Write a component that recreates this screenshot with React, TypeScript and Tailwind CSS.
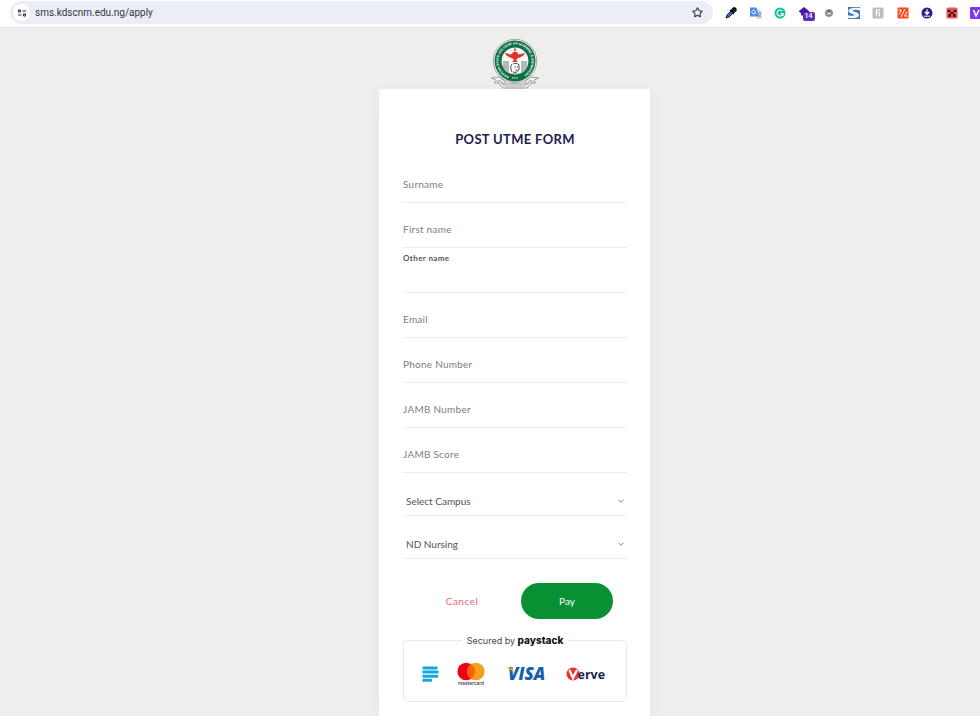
import { useState } from 'react';
import { Star } from 'lucide-react';

const FIELDS = [
  { id: 'surname', label: 'Surname', type: 'text' },
  { id: 'firstName', label: 'First name', type: 'text' },
  { id: 'otherName', label: 'Other name', type: 'text' },
  { id: 'email', label: 'Email', type: 'email' },
  { id: 'phone', label: 'Phone Number', type: 'tel' },
  { id: 'jambNumber', label: 'JAMB Number', type: 'text' },
  { id: 'jambScore', label: 'JAMB Score', type: 'text' },
];

const EXTENSIONS = [
  {
    name: 'Color picker',
    icon: (
      <>
        <path d="M1 11l1-3 4-4 2 2-4 4z" fill="#3f6fd8" stroke="#111827" strokeWidth="1" />
        <path d="M5 3l4 4M6 4l2-2.500a1.500 1.500 0 0 1 2.500 2.500L8 6z" fill="#0b0f1a" stroke="#0b0f1a" strokeWidth="1.500" />
      </>
    ),
  },
  {
    name: 'Translate',
    icon: (
      <>
        <path d="M5 3h6.500v9H7z" fill="#d5d9df" />
        <path d="M0 .5h6.500l2.500 9H0z" fill="#4a86ee" />
        <path d="M5.500 4A2 2 0 1 0 5.800 5.500H4" fill="none" stroke="#fff" strokeWidth="0.900" />
        <path d="M8 6h3M9.500 5v1M10.500 6c0 2-1 3-2 4M9 7.500l2 2.500" stroke="#7d8792" strokeWidth="0.700" fill="none" />
      </>
    ),
  },
  {
    name: 'Grammar check',
    icon: (
      <>
        <circle cx="6" cy="6" r="5.500" fill="#15c39a" />
        <path d="M8.500 4.200A3 3 0 1 0 9 6.700H6.500M9 6.500V9" fill="none" stroke="#fff" strokeWidth="1.200" />
      </>
    ),
  },
  { name: 'Saved pages', badge: '14', icon: <path d="M5 0l5.500 4.500-1.500 1v3H2V6L-.5 4.500z" fill="#4714a8" /> },
  {
    name: 'Site detector',
    icon: (
      <>
        <circle cx="6" cy="6" r="3.800" fill="#555" />
        <circle cx="6" cy="6" r="3.100" fill="none" stroke="#ddd" strokeWidth="0.500" />
        <path d="M4 4.500l1 3.500 1-3 1 3 1-3.500" fill="none" stroke="#fff" strokeWidth="0.700" />
      </>
    ),
  },
  {
    name: 'Similar sites',
    icon: (
      <>
        <path d="M0 0h12v12H0z" fill="#3576b5" />
        <path d="M12 1v2.500C9 2.500 5 2.300 4.800 3.500 4.600 5 11 4.800 11 8c0 3-5 3.800-11 2.700V8.200c3 .8 6 .8 6.200-.2C6.400 6.700.5 7 .5 3.800.500 1 6 .2 12 1z" fill="#f4f8fc" />
      </>
    ),
  },
  {
    name: 'Highlighter',
    icon: (
      <>
        <rect x="0.500" y="0.500" width="11" height="11" rx="1.500" fill="#bdbdbd" />
        <path d="M4.500 2v7.500M4.500 6.500c0-2 3-2 3 0v3M7 2v2" stroke="#fff" strokeWidth="1.200" fill="none" />
      </>
    ),
  },
  {
    name: 'Analytics',
    icon: (
      <>
        <rect x="0.500" y="0.500" width="11" height="11" rx="1" fill="#ff4317" />
        <path d="M1.500 3h3L2 7.500M8 2L4 10M10 4.500L7.500 9h3" stroke="#fff" strokeWidth="1" fill="none" />
      </>
    ),
  },
  {
    name: 'Downloader',
    icon: (
      <>
        <circle cx="6" cy="6" r="5.500" fill="#35178a" />
        <path d="M6 2v4M3.800 5.200L6 7.800l2.200-2.600zM3 9.200h6" stroke="#fff" strokeWidth="1" fill="#fff" />
      </>
    ),
  },
  {
    name: 'Diagram',
    icon: (
      <>
        <rect x="0.500" y="0.500" width="11" height="11" rx="1.500" fill="#f4525a" />
        <path d="M1.500 3h3v2h-3zM7.500 3h3v2h-3zM4.500 5h3v2h-3zM2.500 7h2.500v3H2.500zM7 7h2.500v3H7z" fill="#351b22" />
      </>
    ),
  },
  {
    name: 'Video recorder',
    icon: (
      <>
        <rect width="12" height="12" rx="1" fill="#7c3aed" />
        <path d="M3.500 3L6 9l3-6" stroke="#fff" strokeWidth="1.500" fill="none" />
      </>
    ),
  },
];

function BrowserBar() {
  return (
    <header className="flex h-7 items-start overflow-hidden border-b border-[#e4e4e4] bg-white pt-px">
      <div className="ml-2.5 flex h-[23px] min-w-0 flex-1 items-center rounded-full bg-[#ebeef7] pl-[3px] pr-2.5">
        <button type="button" aria-label="Site information" className="flex size-[17px] items-center justify-center rounded-full bg-white">
          <svg viewBox="0 0 10 10" className="size-2.5" fill="none" stroke="#34373b" strokeWidth="1.200">
            <circle cx="2.500" cy="3" r="1.100" />
            <path d="M5.500 3H9M1 7h3.500" />
            <circle cx="7.500" cy="7" r="1.100" />
          </svg>
        </button>
        <input
          aria-label="Address"
          defaultValue="sms.kdscnm.edu.ng/apply"
          className="ml-[5px] min-w-0 flex-1 bg-transparent font-[Roboto,sans-serif] text-[10px] leading-4 text-[#34373b] outline-none"
        />
        <button type="button" aria-label="Bookmark this page">
          <Star size={11} strokeWidth={2.5} className="text-[#3c4043]" />
        </button>
      </div>
      <div className="-mr-0.5 ml-3 flex h-[23px] w-[257px] shrink-0 items-center justify-between">
        {EXTENSIONS.map((ext) => (
          <button key={ext.name} type="button" aria-label={ext.name} className="relative size-3">
            <svg viewBox="0 0 12 12" className="size-3">{ext.icon}</svg>
            {ext.badge && (
              <span className="absolute -right-1 top-[5px] rounded-[2px] bg-[#5e2cb8] px-0.5 font-[Roboto,sans-serif] text-[7px] font-medium leading-[9px] text-white">
                {ext.badge}
              </span>
            )}
          </button>
        ))}
      </div>
    </header>
  );
}

function CollegeCrest() {
  return (
    <svg viewBox="0 0 48 50" className="h-[50px] w-12" role="img" aria-label="College crest">
      <g fill="#f3f3f2" stroke="#62656a" strokeWidth="0.600">
        <path d="M0.500 39l8-1 6 5-3 3-2-2.500-6 .5 2-2.500z" />
        <path d="M47.500 39l-8-1-6 5 3 3 2-2.500 6 .5-2-2.500z" />
        <path d="M8 41l5 4h22l5-4 1 3-5 5H12l-5-5z" />
      </g>
      <path d="M13.500 47h21M9 43.500l4 3M39 43.500l-4 3" stroke="#777" strokeWidth="0.800" strokeDasharray="1 .4" />
      <circle cx="24" cy="22" r="21.700" fill="#fff" stroke="#6b6f6d" strokeWidth="0.600" />
      <circle cx="24" cy="22" r="20.500" fill="#0c6f45" />
      <circle cx="24" cy="22" r="13.400" fill="#f8f8f8" />
      <path id="crest-ring" d="M18 37.400A16.500 16.500 0 1 1 30 37.400" fill="none" />
      <text fill="#fff" fontFamily="Liberation Sans, sans-serif" fontWeight="700" fontSize="3.300">
        <textPath href="#crest-ring">KADUNA STATE COLLEGE OF NURSING &amp; MIDWIFERY</textPath>
      </text>
      <path d="M21 38.800h6" stroke="#e8f1ec" strokeWidth="1.200" strokeDasharray="1.200 1" />
      <path d="M12 22h24v6c-2 5-6 7-12 7s-10-2-12-7z" fill="#b4b6b8" />
      <path d="M18 21h12v13H18z" fill="#fff" />
      <path d="M14 14c3 0 4 2 7 1l1-2h4l1 2c3 1 4-1 7-1-1 3-4 4-7 5l-2 2 2 2h-6l2-2-2-2c-3-1-6-2-7-5z" fill="#e3312c" />
      <path d="M24 9c2 1 1 3 0 4-1-1-2-3 0-4z" fill="#e9573f" />
      <path d="M21 25c-2 2-1 6 0 8M22 25c2-1 5-1 6 1v4c-1 3-3 4-6 3M23.500 28h1.500M26 28h1M24.500 31h2" fill="none" stroke="#333" strokeWidth="0.900" />
    </svg>
  );
}

function TextField({ id, label, type }: { id: string; label: string; type: string }) {
  const [value, setValue] = useState('');
  const [raised, setRaised] = useState(id === 'otherName');

  return (
    <div className="relative h-[45px] border-b border-[#ececec]">
      <label
        htmlFor={id}
        className={
          raised
            ? 'pointer-events-none absolute left-0 top-1 text-[8px] font-bold leading-3 tracking-wider text-[#50545c]'
            : 'pointer-events-none absolute left-0 top-[17px] text-[10px] leading-[18px] tracking-wide text-[#7b7e82]'
        }
      >
        {label}
      </label>
      <input
        id={id}
        type={type}
        value={value}
        onChange={(e) => setValue(e.target.value)}
        onFocus={() => setRaised(true)}
        onBlur={() => setRaised(value !== '')}
        className="h-full w-full bg-transparent pt-3 text-[10px] text-[#50545c] outline-none"
      />
    </div>
  );
}

function SelectField({ label, options }: { label: string; options: string[] }) {
  return (
    <div className="relative flex h-[43px] items-start border-b border-[#ececec] pt-[18px]">
      <select aria-label={label} className="h-5 w-full appearance-none bg-transparent pl-[3px] text-[10px] leading-5 text-[#50545c] outline-none">
        {options.map((option) => (
          <option key={option}>{option}</option>
        ))}
      </select>
      <svg viewBox="0 0 6 4" className="pointer-events-none absolute right-[3px] top-[26px] h-1 w-1.5" fill="none" stroke="#777b80" strokeWidth="0.900">
        <path d="M0.500 0.700L3 3.200 5.500 0.700" />
      </svg>
    </div>
  );
}

function PaymentMethods() {
  return (
    <fieldset className="mt-[13px] rounded border border-[#e9eaec] pb-[14px]">
      <legend className="mx-auto px-[5px] font-[Inter,sans-serif] text-[9px] leading-4 text-[#44484d]">
        Secured by <b className="text-[10px] font-extrabold text-[#141518]">paystack</b>
      </legend>
      <div className="flex items-center justify-between pl-[18px] pr-[21px] pt-3">
        <svg viewBox="0 0 17 17" className="size-[17px]" fill="#18a7dd" role="img" aria-label="Paystack">
          <rect x="0.500" y="0.500" width="15" height="3" rx="0.600" />
          <rect x="0.500" y="4.600" width="16" height="3" rx="0.600" />
          <rect x="0.500" y="8.700" width="15.500" height="3" rx="0.600" />
          <rect x="0.500" y="12.800" width="9.500" height="3" rx="0.600" />
        </svg>
        <svg viewBox="0 0 28 24" className="h-6 w-7" role="img" aria-label="Mastercard">
          <circle cx="9.200" cy="9.500" r="8.800" fill="#eb001b" />
          <circle cx="18.800" cy="9.500" r="8.800" fill="#f79e1b" />
          <path d="M14 2.200a8.800 8.800 0 0 1 0 14.600 8.800 8.800 0 0 1 0-14.600z" fill="#ff5f00" />
          <text x="14" y="22.500" textAnchor="middle" fontFamily="Inter, sans-serif" fontWeight="500" fontSize="4.800" fill="#333">
            mastercard
          </text>
        </svg>
        <svg viewBox="0 0 44 26" className="h-[26px] w-11" role="img" aria-label="Visa">
          <text x="4" y="19" fontFamily="Open Sans, sans-serif" fontWeight="800" fontStyle="italic" fontSize="17" fill="#1560ae">
            VISA
          </text>
          <path d="M1.500 6.800H7c1 0 1.500.5 1.700 1.300L9.500 12C8 9.500 5.500 7.800 1.500 6.800z" fill="#f5a31c" />
        </svg>
        <svg viewBox="0 0 39 16" className="h-4 w-[39px]" role="img" aria-label="Verve">
          <circle cx="7" cy="8" r="6.500" fill="#ee312a" />
          <path d="M3.500 4L7 12 11 4" fill="none" stroke="#fff" strokeWidth="2.300" />
          <text x="11.500" y="13" fontFamily="Open Sans, sans-serif" fontWeight="700" fontSize="12.500" fill="#14284b">
            erve
          </text>
        </svg>
      </div>
    </fieldset>
  );
}

export default function App() {
  return (
    <div className="flex min-h-screen flex-col bg-[#eeeeec] font-[Lato,sans-serif]">
      <BrowserBar />
      <main className="flex flex-1 flex-col items-center pl-[49px] pt-[11px]">
        <CollegeCrest />
        <form
          onSubmit={(e) => e.preventDefault()}
          className="flex w-full max-w-[271px] flex-1 flex-col rounded-t-[3px] bg-white pb-4 pl-6 pr-[23px] pt-10 shadow-[0_4px_20px_rgba(0,0,0,0.04)]"
        >
          <h1 className="mb-[9px] text-center text-[13px] font-bold leading-5 tracking-wide text-[#1d2152]">POST UTME FORM</h1>
          {FIELDS.map((field) => (
            <TextField key={field.id} {...field} />
          ))}
          <SelectField label="Campus" options={['Select Campus']} />
          <SelectField label="Programme" options={['ND Nursing']} />
          <div className="mt-6 flex">
            <button type="button" className="h-9 flex-1 text-[10px] tracking-wider text-[#f4636d]">
              Cancel
            </button>
            <button type="submit" className="mr-[14px] h-9 w-[92px] rounded-full bg-[#099032] text-[10px] text-white">
              Pay
            </button>
          </div>
          <PaymentMethods />
        </form>
      </main>
    </div>
  );
}
